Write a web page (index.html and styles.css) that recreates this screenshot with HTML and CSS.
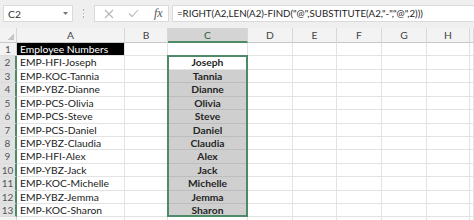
FILE: index.html
```html
<!DOCTYPE html>
<html lang="en">

<head>
    <meta charset="UTF-8">
    <title>RIGHT / SUBSTITUTE</title>
    <link rel="stylesheet" href="styles.css">
</head>

<body>
    <div class="toolbar">
        <div class="namebox">
            <span>C2</span>
            <svg class="caret" width="5" height="3" viewBox="0 0 5 3"><path d="M0 0H5L2.5 3Z" fill="#777"/></svg>
        </div>
        <div class="grip"><i></i><i></i><i></i></div>
        <div class="fxbox">
            <svg class="cancel" width="10" height="10" viewBox="0 0 10 10"><path d="M1 1L9 9M9 1L1 9" stroke="#b5b5b5" stroke-width="1.1"/></svg>
            <svg class="enter" width="11" height="9" viewBox="0 0 11 9"><path d="M1 4.5L4 7.5L10 1" fill="none" stroke="#b5b5b5" stroke-width="1.1"/></svg>
            <span class="fx">fx</span>
        </div>
        <div class="formula">=RIGHT(A2,LEN(A2)-FIND("@",SUBSTITUTE(A2,"-","@",2)))</div>
    </div>
    <div class="sheet" id="sheet">
        <div class="selection"></div>
    </div>
    <script>
        var cols = ["A", "B", "C", "D", "E", "F", "G", "H", ""];
        var codes = ["HFI-Joseph", "KOC-Tannia", "YBZ-Dianne", "PCS-Olivia", "PCS-Steve", "PCS-Daniel",
            "YBZ-Claudia", "HFI-Alex", "YBZ-Jack", "KOC-Michelle", "YBZ-Jemma", "KOC-Sharon"];
        var sheet = document.getElementById("sheet");

        function addCell(cls, text) {
            let d = document.createElement("div");
            d.className = cls;
            d.textContent = text || "";
            sheet.appendChild(d);
        }

        //欄標題
        addCell("corner");
        for (let i = 0; i < cols.length; i++) {
            addCell(cols[i] == "C" ? "colhead cur" : "colhead", cols[i]);
        }

        //資料列
        for (let r = 1; r <= 14; r++) {
            let sel = r >= 2 && r <= 13;
            addCell(sel ? "rowhead sel" : "rowhead", r);
            for (let c = 0; c < cols.length; c++) {
                let cls = "cell";
                let text = "";
                if (c == 0 && r == 1) { cls += " title"; text = "Employee Numbers"; }
                if (c == 0 && sel) { text = "EMP-" + codes[r - 2]; }
                if (c == 2 && sel) {
                    cls += r == 2 ? " name" : " name shade";
                    text = codes[r - 2].split("-")[1];
                }
                addCell(cls, text);
            }
        }
    </script>
</body>

</html>
```

FILE: styles.css
```css
body {
    margin: 0;
    width: 474px;
    height: 220px;
    overflow: hidden;
    background: #ffffff;
    font-family: Lato, "Liberation Sans", sans-serif;
    font-size: 10.3px;
    color: #222;
}
.toolbar {
    height: 28px;
    background: #efefef;
    display: flex;
    align-items: flex-start;
    padding: 5px 0 0 3px;
    box-sizing: border-box;
}
.namebox {
    width: 70px;
    height: 17px;
    background: #fff;
    border: 1px solid #dadada;
    box-sizing: border-box;
    display: flex;
    align-items: center;
    justify-content: space-between;
    padding: 0 4px 0 4px;
    color: #333;
}
.grip {
    width: 21px;
    display: flex;
    flex-direction: column;
    align-items: center;
    gap: 2px;
    padding-top: 4px;
}
.grip i {
    width: 1.5px;
    height: 1.5px;
    background: #b0b0b0;
}
.fxbox {
    width: 75px;
    height: 17px;
    background: #fff;
    border: 1px solid #dadada;
    box-sizing: border-box;
    display: flex;
    align-items: center;
    padding-left: 9px;
    gap: 14px;
}
.fx {
    font-family: "Liberation Serif", serif;
    font-style: italic;
    font-size: 12px;
    color: #555;
    margin-left: 1px;
}
.formula {
    flex: 1;
    margin-left: 3px;
    height: 17px;
    background: #fff;
    border: 1px solid #dadada;
    border-right: none;
    box-sizing: border-box;
    padding-left: 4px;
    line-height: 15px;
    font-size: 9.7px;
    color: #222;
    white-space: nowrap;
}
.sheet {
    position: relative;
    display: grid;
    grid-template-columns: 17px 108px 43px 80px 45px 44px 45px 45px 43px 1fr;
    grid-template-rows: 15px;
    grid-auto-rows: 13.43px;
}
.corner,
.colhead {
    background: #f3f3f3;
    border-right: 1px solid #d8d8d8;
    border-bottom: 1px solid #c8c8c8;
    box-sizing: border-box;
    text-align: center;
    line-height: 14px;
    color: #444;
}
.corner {
    background: #f3f3f3 linear-gradient(135deg, transparent 62%, #c4c4c4 62%) no-repeat right 2px bottom 2px / 8px 8px;
}
.colhead.cur {
    background: #d4d4d4;
    border-bottom: 2px solid #4f8a68;
    color: #2f5f45;
}
.rowhead {
    background: #f3f3f3;
    border-right: 1px solid #d0d0d0;
    border-bottom: 1px solid #dcdcdc;
    box-sizing: border-box;
    text-align: center;
    color: #555;
    line-height: 13px;
    font-size: 10px;
}
.rowhead.sel {
    background: #e2e2e2;
    border-right: 2px solid #4f8a68;
}
.cell {
    border-right: 1px solid #e3e3e3;
    border-bottom: 1px solid #e3e3e3;
    box-sizing: border-box;
    padding-left: 3px;
    line-height: 13px;
    white-space: nowrap;
    overflow: hidden;
}
.title {
    background: #000;
    color: #fff;
}
.name {
    text-align: center;
    padding-left: 0;
    font-weight: bold;
    color: #262626;
}
.shade {
    background: #cfcfcf;
    border-color: #bdbdbd;
    border-right-color: #cfcfcf;
}
.selection {
    position: absolute;
    grid-column: 4 / 5;
    grid-row: 3 / 15;
    top: -1px;
    left: -1px;
    right: 0;
    bottom: 0;
    border: 2px solid #4f8a68;
    z-index: 2;
    pointer-events: none;
}
```
